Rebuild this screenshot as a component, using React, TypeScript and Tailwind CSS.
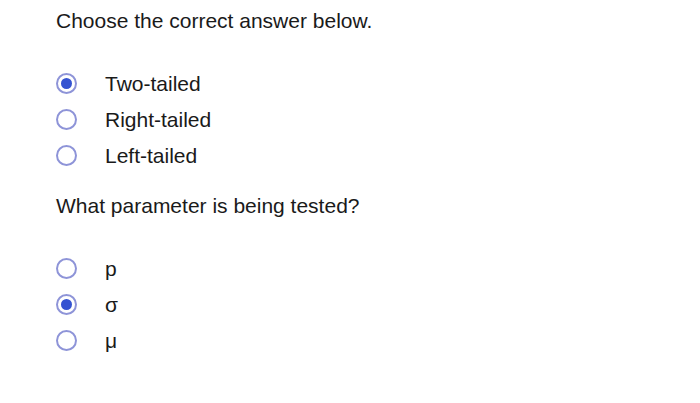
import React from 'react';

type Opt = { label: string; checked?: boolean };

function Radio({ checked }: { checked?: boolean }) {
  return (
    <span className="w-[21px] h-[21px] rounded-full border-2 border-[#8e94d8] bg-white flex items-center justify-center shrink-0">
      {checked && <span className="w-[11px] h-[11px] rounded-full bg-[#3553d1]" />}
    </span>
  );
}

function Options({ items, className }: { items: Opt[]; className: string }) {
  return (
    <div className={`flex flex-col gap-[15px] ${className}`}>
      {items.map((o) => (
        <div key={o.label} className="flex items-center h-[21px]">
          <Radio checked={o.checked} />
          <span className="ml-[28px] text-[21px] text-[#1a1a1a] leading-none">{o.label}</span>
        </div>
      ))}
    </div>
  );
}

export default function App() {
  return (
    <div
      className="w-[700px] h-[403px] bg-white pl-[56px] pt-[9px]"
      style={{ fontFamily: '"Liberation Sans", Arial, sans-serif' }}
    >
      <p className="text-[21px] text-[#1a1a1a] leading-[24px]">Choose the correct answer below.</p>
      <Options
        className="mt-[40px]"
        items={[{ label: 'Two-tailed', checked: true }, { label: 'Right-tailed' }, { label: 'Left-tailed' }]}
      />
      <p className="mt-[28px] text-[21px] text-[#1a1a1a] leading-[24px]">What parameter is being tested?</p>
      <Options className="mt-[40px]" items={[{ label: 'p' }, { label: 'σ', checked: true }, { label: 'μ' }]} />
    </div>
  );
}
